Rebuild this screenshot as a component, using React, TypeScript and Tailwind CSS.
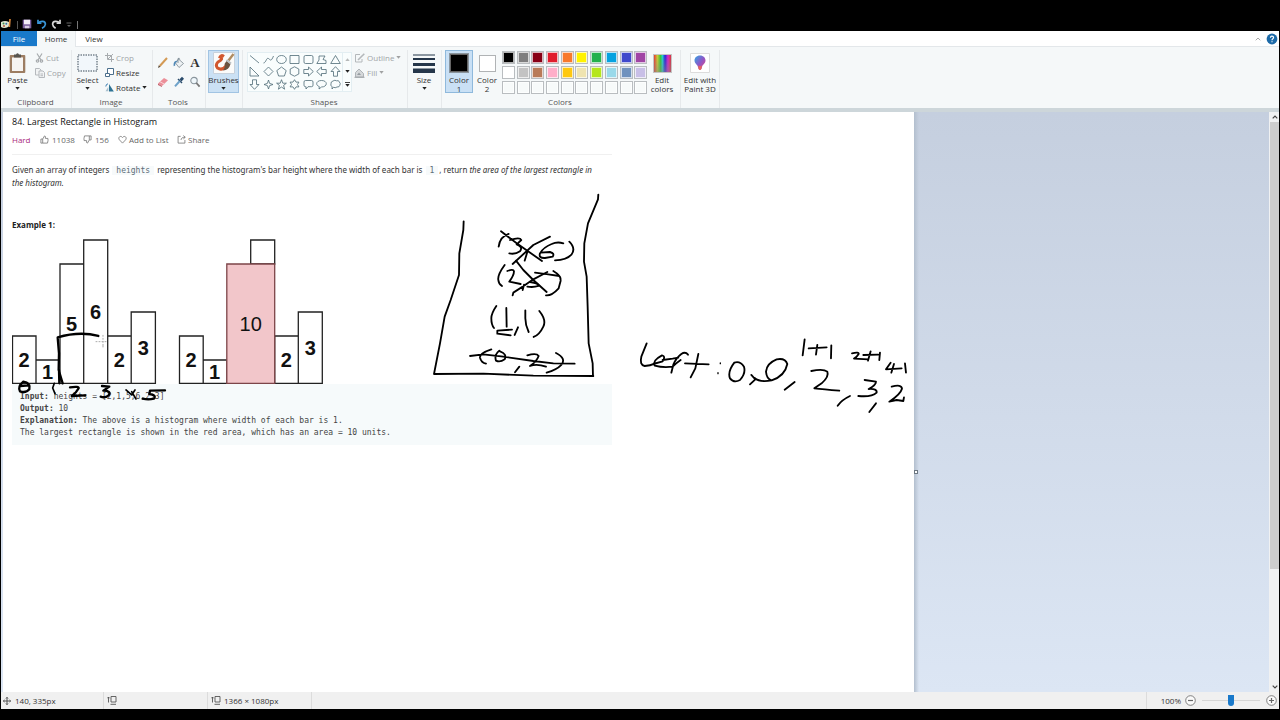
import type { ReactNode } from "react";

const label = "text-[8px] leading-[9px]";

function Arrow() {
  return (
    <svg width="5" height="3" viewBox="0 0 5 3" aria-hidden="true">
      <path d="M0.3 0h4.4L2.5 2.8z" fill="#222" />
    </svg>
  );
}

function Group({ name, className, children }: { name?: string; className: string; children: ReactNode }) {
  return (
    <section className={`flex shrink-0 flex-col border-r border-[#e6e9eb] ${className}`}>
      <div className="flex flex-1 items-start">{children}</div>
      <h2 className="h-3 pr-[2px] text-center text-[8px] leading-[11px] text-[#555]">{name}</h2>
    </section>
  );
}

function BigButton({ icon, text, arrow, className = "" }: { icon: ReactNode; text: ReactNode; arrow?: boolean; className?: string }) {
  return (
    <button className={`flex flex-col items-center justify-start ${className}`}>
      <span className="flex h-[22px] shrink-0 items-center justify-center">{icon}</span>
      <span className={`${label} pt-px text-center text-[#333]`}>{text}</span>
      {arrow && (
        <span className="pt-[3px]">
          <Arrow />
        </span>
      )}
    </button>
  );
}

function SmallButton({ icon, text, muted, arrow }: { icon: ReactNode; text: string; muted?: boolean; arrow?: boolean }) {
  return (
    <button className={`flex h-[15px] items-center gap-[2px] ${label} ${muted ? "text-[#a0a4a7]" : "text-[#333]"}`}>
      {icon}
      <span>{text}</span>
      {arrow && (
        <span className={muted ? "opacity-40" : ""}>
          <Arrow />
        </span>
      )}
    </button>
  );
}

const shapePaths = [
  "M1 1.5L10 9",
  "M0.5 9C3 9 3.5 3 5.5 4.5S8 8 10.5 2",
  "M5.5 1.5C8.3 1.5 10.3 3.2 10.3 5.5S8.3 9.5 5.5 9.5S0.7 7.8 0.7 5.5S2.7 1.5 5.5 1.5z",
  "M1 1.5h9v8h-9z",
  "M2.5 1.5h6q1.5 0 1.5 1.5v5q0 1.5-1.5 1.5h-6q-1.5 0-1.5-1.5v-5q0-1.5 1.5-1.5z",
  "M3 2h6L7 5.5l3 1V9.5H0.8L3 6z",
  "M5.5 1.5L10.3 9.5H0.7z",
  "M1 1L10 10H1z",
  "M5.5 1L10 5.5L5.5 10L1 5.5z",
  "M5.5 1L10.2 4.6L8.4 10H2.6L0.8 4.6z",
  "M5.5 0.8L9.8 3V8L5.5 10.2L1.2 8V3z",
  "M0.8 3.5H5.5V1L10.3 5.5L5.5 10V7.5H0.8z",
  "M10.2 3.5H5.5V1L0.7 5.5L5.5 10V7.5H10.2z",
  "M3.5 10.2V5.5H1L5.5 0.7L10 5.5H7.5V10.2z",
  "M3.5 0.8V5.5H1L5.5 10.3L10 5.5H7.5V0.8z",
  "M5.5 1L6.6 4.4L10 5.5L6.6 6.6L5.5 10L4.4 6.6L1 5.5L4.4 4.4z",
  "M5.5 0.7L6.8 4.2H10.4L7.6 6.4L8.6 10.2L5.5 8L2.4 10.2L3.4 6.4L0.6 4.2H4.2z",
  "M5.5 0.7L7 3.1H9.9L8.5 5.5L9.9 7.9H7L5.5 10.3L4 7.9H1.1L2.5 5.5L1.1 3.1H4z",
  "M2.5 1.5h6q1.5 0 1.5 1.5v3.2q0 1.5-1.5 1.5H5L3 10V7.7h-.5Q1 7.7 1 6.2V3q0-1.5 1.5-1.5z",
  "M5.5 1.5C8.3 1.5 10.3 2.8 10.3 4.7S8.3 8 5.5 8L3 10L3.3 7.6C1.7 7 0.7 6 0.7 4.7C0.7 2.8 2.7 1.5 5.5 1.5z",
  "M3 2Q5 0.6 6.5 1.8Q9 1 9.3 3Q11 4.5 9.8 6.3Q9.5 8.3 7 8Q5 9.4 3.6 8.2L2 10L2.2 7.6Q0 6.8 1 4.8Q0.6 2.6 3 2z",
];

const palette = [
  "bg-black", "bg-[#7f7f7f]", "bg-[#880015]", "bg-[#e01c2c]", "bg-[#f8792c]",
  "bg-[#fff200]", "bg-[#24b14d]", "bg-[#05a2e0]", "bg-[#3f48cc]", "bg-[#a044a4]",
  "bg-white", "bg-[#c3c3c3]", "bg-[#b97a57]", "bg-[#ffaec9]", "bg-[#fec810]",
  "bg-[#efe4b0]", "bg-[#b5e61d]", "bg-[#99d9ea]", "bg-[#7092be]", "bg-[#c8bfe7]",
  "bg-[#f7fafa]", "bg-[#f7fafa]", "bg-[#f7fafa]", "bg-[#f7fafa]", "bg-[#f7fafa]",
  "bg-[#f7fafa]", "bg-[#f7fafa]", "bg-[#f7fafa]", "bg-[#f7fafa]", "bg-[#f7fafa]",
];

function TitleBar() {
  return (
    <header className="flex h-[31px] shrink-0 items-end gap-[5px] bg-black pb-[2px] text-[#444]">
      <svg width="11" height="11" viewBox="0 0 11 11" aria-hidden="true">
        <path d="M0 4Q4 2 8 4Q10 7 7 9Q3 11 0 9z" fill="#dfe6cf" />
        <circle cx="2.5" cy="5.5" r="1" fill="#3d8b50" />
        <circle cx="5.3" cy="5.8" r="1" fill="#356fa8" />
        <circle cx="3" cy="8" r="0.9" fill="#b84a35" />
        <path d="M9 1L8.4 9" stroke="#d9863a" strokeWidth="1.6" />
      </svg>
      <span className="h-2 w-px bg-[#555]" />
      <button aria-label="Save" className="ml-[-1px]">
        <svg width="10" height="10" viewBox="0 0 10 10" className="block">
          <path d="M0.7 0.7h8.6v8.6H0.7z" fill="#7a5f9d" />
          <path d="M2 0.7h6v4.6H2z" fill="#f3eef8" />
          <path d="M2.8 6.8h4.6v2.5H2.8z" fill="#d7cbe3" />
        </svg>
      </button>
      <button aria-label="Undo">
        <svg width="10" height="10" viewBox="0 0 10 10" className="block" fill="none" stroke="#3995d6" strokeWidth="1.7">
          <path d="M1 0.8V4.2H4.4" />
          <path d="M1.2 4C3.5 1.6 8.4 1.6 8.4 5.2Q8.2 7.6 5 9.3" />
        </svg>
      </button>
      <button aria-label="Redo" className="ml-[-1px]">
        <svg width="10" height="10" viewBox="0 0 10 10" className="block" fill="none" stroke="#d8d8d8" strokeWidth="1.7">
          <path d="M9 0.8V4.2H5.6" />
          <path d="M8.8 4C6.5 1.6 1.6 1.6 1.6 5.2Q1.8 7.6 4.6 9.3" />
        </svg>
      </button>
      <button aria-label="Customize Quick Access Toolbar">
        <svg width="6" height="8" viewBox="0 0 6 8" className="block">
          <path d="M0.5 2h5" stroke="#666" />
          <path d="M1 4h4L3 6z" fill="#666" />
        </svg>
      </button>
      <span className="h-2 w-px bg-[#777]" />
    </header>
  );
}

function Tabs() {
  return (
    <nav className="flex h-4 shrink-0 items-stretch border-b border-[#e3e7ea] bg-white pr-px text-[8px] text-[#333]">
      <button className="w-[36px] bg-[#1979ca] text-white">File</button>
      <button className="-mb-px w-[39px] border-r border-[#e3e7ea] bg-[#f5f8f9]">Home</button>
      <button className="w-[36px]">View</button>
      <span className="flex-1" />
      <button aria-label="Collapse the Ribbon" className="px-[3px]">
        <svg width="6" height="4" viewBox="0 0 6 4" fill="none" stroke="#aaa">
          <path d="M0.7 3.3L3 1L5.3 3.3" />
        </svg>
      </button>
      <button aria-label="Help" className="pl-[2px]">
        <svg width="12" height="12" viewBox="0 0 12 12">
          <circle cx="6" cy="6" r="5.4" fill="#1c6aa8" />
          <path d="M4.4 4.7Q4.5 3.2 6 3.2T7.6 4.6Q7.6 5.4 6.6 6Q6 6.4 6 7.2M6 8.2V9.3" fill="none" stroke="#fff" strokeWidth="1.2" />
        </svg>
      </button>
    </nav>
  );
}

function Ribbon() {
  return (
    <div className="flex h-[61px] shrink-0 bg-[#f5f8f9] pt-[3px] pl-px">
      <Group name="Clipboard" className="w-[70px]">
        <BigButton
          className="w-[31px] pt-[2px]"
          text="Paste"
          arrow
          icon={
            <svg width="17" height="21" viewBox="0 0 17 21">
              <rect x="0.7" y="2" width="15.6" height="18" rx="1" fill="#9c7d62" />
              <rect x="3" y="4.4" width="11" height="13.6" fill="#f6f4f2" />
              <path d="M5 1.4h2Q8.5-0.8 10 1.4h2v3H5z" fill="#57544f" />
            </svg>
          }
        />
        <div className="flex flex-col pl-[2px]">
          <SmallButton
            muted
            text="Cut"
            icon={
              <svg width="9" height="10" viewBox="0 0 8 10" fill="none" stroke="#a7abae" strokeWidth="1.2">
                <path d="M1.5 0.5L5.5 7M6.5 0.5L2.5 7" />
                <circle cx="2" cy="8" r="1.2" />
                <circle cx="6" cy="8" r="1.2" />
              </svg>
            }
          />
          <SmallButton
            muted
            text="Copy"
            icon={
              <svg width="10" height="10" viewBox="0 0 10 10" fill="#f1f3f4" stroke="#b5b9bd">
                <path d="M0.5 0.5h4l1.5 1.5v5h-5.5z" />
                <path d="M4 3h4l1.5 1.5v5H4z" />
                <path d="M5.5 6h2.5M5.5 7.7h2.5" />
              </svg>
            }
          />
        </div>
      </Group>

      <Group name="Image" className="w-[81px]">
        <BigButton
          className="w-[31px] pt-[2px]"
          text="Select"
          arrow
          icon={
            <svg width="21" height="18" viewBox="0 0 21 18">
              <rect x="1" y="1" width="19" height="16" fill="#f2f7fb" stroke="#3b4a58" strokeDasharray="1.5 1" />
            </svg>
          }
        />
        <div className="flex flex-col pl-[2px]">
          <SmallButton
            muted
            text="Crop"
            icon={
              <svg width="9" height="9" viewBox="0 0 9 9" fill="none" stroke="#a7abae">
                <path d="M2.5 0v6.5H9M0 2.5h6.5V9M3 6L8 1" />
              </svg>
            }
          />
          <SmallButton
            text="Resize"
            icon={
              <svg width="9" height="9" viewBox="0 0 9 9" fill="#fff" stroke="#4b6f8c">
                <path d="M2.5 0.5h6v6h-6z" />
                <path d="M0.5 5.5h4v3h-4z" />
              </svg>
            }
          />
          <SmallButton
            text="Rotate"
            arrow
            icon={
              <svg width="9" height="9" viewBox="0 0 9 9">
                <path d="M4 8.5V1L8.8 8.5z" fill="#2d7394" />
                <path d="M0.5 8.3h2.8V4z" fill="#a7bfce" />
                <path d="M0.8 3.5Q1 1 3 0.8" fill="none" stroke="#3d7fb1" />
              </svg>
            }
          />
        </div>
      </Group>

      <Group name="Tools" className="w-[53px]">
        <div className="grid w-full grid-cols-3 place-items-center gap-y-[7px] px-[2px] pt-[7px]">
          <button aria-label="Pencil">
            <svg width="12" height="12" viewBox="0 0 12 12" className="block">
              <path d="M10 1L2.8 9" stroke="#d39a55" strokeWidth="2" />
              <path d="M1 11L1.8 8.3L3.5 9.8z" fill="#554433" />
            </svg>
          </button>
          <button aria-label="Fill with color">
            <svg width="12" height="12" viewBox="0 0 12 12" className="block">
              <path d="M5.5 2L10.5 6.5L6 10.5L2.5 6z" fill="#eef2f4" stroke="#7b8891" strokeWidth="0.8" />
              <path d="M5 6V1.5Q6.5 0.5 6.8 2.5" fill="none" stroke="#70808a" strokeWidth="0.8" />
              <path d="M0.7 9.3Q-0.2 3 5 3.8Q1.8 5.5 2.2 8.5z" fill="#5089b7" />
            </svg>
          </button>
          <button aria-label="Text" className="font-['Liberation_Serif',serif] text-[13px] leading-3 font-bold text-[#333]">A</button>
          <button aria-label="Eraser">
            <svg width="12" height="12" viewBox="0 0 12 12" className="block">
              <path d="M1 7.5L7 2L11 4.3L5 10z" fill="#eb8f99" />
              <path d="M1 7.5L5 10V11L1 9z" fill="#c2626d" />
              <path d="M3 5.8L7.2 8" stroke="#f9d4d7" />
            </svg>
          </button>
          <button aria-label="Color picker">
            <svg width="12" height="12" viewBox="0 0 12 12" className="block">
              <path d="M6.5 3.2L9 0.8L11 2.8L8.5 5.5z" fill="#2a4b6b" />
              <path d="M5 3L9 7" stroke="#2a4b6b" strokeWidth="1.5" />
              <path d="M6.8 5L2 10.3" stroke="#6ea2c9" strokeWidth="2" />
            </svg>
          </button>
          <button aria-label="Magnifier">
            <svg width="12" height="12" viewBox="0 0 12 12" className="block">
              <circle cx="5" cy="4.6" r="3.2" fill="#eff7fb" stroke="#8a959c" strokeWidth="1.1" />
              <path d="M7.4 7L10.6 10.6" stroke="#777" strokeWidth="1.8" />
            </svg>
          </button>
        </div>
      </Group>

      <Group className="w-[37px]">
        <BigButton
          className="ml-[2px] h-[43px] w-[31px] border border-[#a1c4e3] bg-[#cbe1f4] pt-px"
          text="Brushes"
          arrow
          icon={
            <svg width="22" height="22" viewBox="0 0 22 22">
              <path d="M0.5 0.5h21v21h-21z" fill="#fbfbfa" stroke="#c8d2dc" />
              <path d="M11 4.5Q8 2.5 7 5Q11 7 5 10Q2 13 4.500 16Q9 19 13 14" fill="none" stroke="#d1572e" strokeWidth="3" />
              <path d="M20.5 2L15.5 8.5" stroke="#b08c62" strokeWidth="2.4" />
              <path d="M13.5 9L17.5 12Q16 18 10 18.5Q12.500 15 11.500 12z" fill="#6b5340" />
              <path d="M13.5 8L18 11.5" stroke="#b9bfc3" strokeWidth="2" />
            </svg>
          }
        />
      </Group>

      <Group name="Shapes" className="w-[165px]">
        <div className="mt-[2px] ml-[4px] flex h-[40px] border border-[#e3eef2] bg-[#f9fdfd]">
          <div className="grid w-[94px] grid-cols-7 grid-rows-3 place-items-center">
            {shapePaths.map((d, i) => (
              <button key={i} aria-label={`Shape ${i + 1}`}>
                <svg width="11" height="11" viewBox="0 0 11 11" className="block" fill="none" stroke="#4e6b76" strokeWidth="0.8">
                  <path d={d} />
                </svg>
              </button>
            ))}
          </div>
          <div className="flex w-[9px] flex-col items-center justify-around border-l border-[#e3eef2]">
            <button aria-label="Previous shapes" className="flex rotate-180 opacity-30"><Arrow /></button>
            <button aria-label="Next shapes" className="flex"><Arrow /></button>
            <button aria-label="More shapes" className="flex border-t border-[#444] pt-px"><Arrow /></button>
          </div>
        </div>
        <div className="flex flex-col pl-[2px]">
          <SmallButton
            muted
            arrow
            text="Outline"
            icon={
              <svg width="11" height="10" viewBox="0 0 11 10" fill="none" stroke="#b4b8bb">
                <path d="M6 1.5H1.5V9H8V6" />
                <path d="M10.3 0.7L4 7" strokeWidth="1.6" />
              </svg>
            }
          />
          <SmallButton
            muted
            arrow
            text="Fill"
            icon={
              <svg width="11" height="10" viewBox="0 0 11 10">
                <path d="M1.5 4.5L5 1L9.5 5.5V9H1.5z" fill="#d5d8da" stroke="#aeb3b7" />
                <path d="M0.5 9.3h10" stroke="#9fa4a8" />
                <path d="M3 7L5 4.6L7 7z" fill="#969ca1" />
              </svg>
            }
          />
        </div>
      </Group>

      <Group className="w-[34px]">
        <BigButton
          className="w-[32px] pt-[2px]"
          text="Size"
          arrow
          icon={
            <svg width="22" height="19" viewBox="0 0 22 19" fill="#25364a">
              <path d="M0 0.5h22v1H0zM0 4h22v2H0zM0 9h22v3H0zM0 14.5h22v4.5H0z" />
            </svg>
          }
        />
      </Group>

      <Group name="Colors" className="w-[239px]">
        <BigButton
          className="ml-[3px] h-[43px] w-[28px] border border-[#8fb9dc] bg-[#c9e0f5] pt-px"
          text={<>Color<br />1</>}
          icon={<span className="block size-5 border border-[#8a959e] bg-black ring-1 ring-white/40 ring-inset" />}
        />
        <BigButton
          className="w-[28px] pt-[2px]"
          text={<>Color<br />2</>}
          icon={<span className="block size-[17px] border border-[#b0b3b5] bg-white" />}
        />
        <div className="mt-[1px] ml-[1px] grid w-[147px] grid-cols-10 gap-y-[2px]">
          {palette.map((c, i) => (
            <button key={i} aria-label={`Color ${i + 1}`} className={`size-[13px] border border-[#b9bdc0] ring-1 ring-white/70 ring-inset ${c}`} />
          ))}
        </div>
        <BigButton
          className="w-[26px] pt-[2px]"
          text={<>Edit<br />colors</>}
          icon={<span className="block size-[19px] border border-[#c4c4c4] bg-[linear-gradient(to_bottom,transparent,#8888),linear-gradient(to_right,#e33,#cc3_20%,#3c3_38%,#2cc_50%,#22d_65%,#d2c_82%,#d33)]" />}
        />
      </Group>

      <Group className="w-[39px]">
        <BigButton
          className="w-full pt-[2px]"
          text={<span className="whitespace-nowrap">Edit with<br />Paint 3D</span>}
          icon={
            <svg width="20" height="20" viewBox="0 0 20 20">
              <defs>
                <linearGradient id="drop" x1="0" y1="0" x2="1" y2="1">
                  <stop offset="0" stopColor="#32a8e5" />
                  <stop offset="0.5" stopColor="#8c58c8" />
                  <stop offset="1" stopColor="#e8417f" />
                </linearGradient>
              </defs>
              <path d="M0.5 0.5h19v19h-19z" fill="#fff" stroke="#dcdcdc" />
              <path d="M10 2.5C13.5 2.5 15.5 5 15.5 7.5C15.5 10.5 12.5 11.5 12 14Q11.7 17 10 17T8 14C7.5 11.5 4.5 10.5 4.5 7.5C4.5 5 6.5 2.5 10 2.5z" fill="url(#drop)" />
              <path d="M8.3 12.5Q10 14 11.8 12.5L11.3 16Q10 18 8.6 16z" fill="#e9635a" />
            </svg>
          }
        />
      </Group>
    </div>
  );
}

function Histogram() {
  return (
    <svg width="312" height="145" viewBox="12 239 312 145" className="mt-2 block" fontFamily="'Liberation Sans', Arial, sans-serif" fontSize="20" fontWeight="700" textAnchor="middle">
      <g fill="#fff" stroke="#222" strokeWidth="1.3">
        <path d="M12.5 336h23.5v47.5H12.5zM36 360h24v23.5H36zM60 264h23.7v119.5H60zM83.7 240h24v143.5h-24zM107.7 336h23.5v47.5h-23.5zM131.2 312h24.2v71.5h-24.2z" />
        <path d="M179.5 336h23.7v47.5h-23.7zM203.2 360h23.8v23.5h-23.8zM250.7 240h24v24h-24zM274.7 336h23.6v47.5h-23.6zM298.3 312h24v71.5h-24z" />
        <path d="M226.8 264h47.9v119.5h-47.9z" fill="#f2c6ca" stroke="#7c4448" />
      </g>
      <g fill="#111">
        <text x="24" y="367">2</text>
        <text x="47.5" y="379">1</text>
        <text x="71.5" y="331">5</text>
        <text x="95.5" y="319">6</text>
        <text x="119.3" y="367">2</text>
        <text x="143.2" y="355">3</text>
        <text x="191" y="367">2</text>
        <text x="214.5" y="379">1</text>
        <text x="286.3" y="367">2</text>
        <text x="310.2" y="355">3</text>
        <text x="250.7" y="331" fontWeight="400">10</text>
      </g>
    </svg>
  );
}

function Ink() {
  return (
    <svg className="pointer-events-none absolute inset-0 size-full" viewBox="3 112 911 580" fill="none" stroke="#000" strokeWidth="5.5" strokeLinecap="round" strokeLinejoin="round" aria-hidden="true">
      <g transform="translate(420 190) scale(0.3333)">
        <path d="M131 94L130 120L118 190L117 255L92 330L74 380L60 460L42 552L190 551L340 557L520 558" />
        <path d="M535 14L534 28L504 100L493 160L492 215L500 260L503 350L506 460L518 520L519 558" />
        <path d="M266 132Q240 140 236 170M243 124L290 160L366 213M270 150Q300 140 304 150L290 163Q310 170 300 184Q285 194 268 190M322 186L314 212M390 140L340 165L278 222" />
        <path d="M430 160Q412 154 395 162Q370 172 360 190Q355 205 375 204L398 200Q405 190 390 186L362 188M448 155Q468 175 455 193Q440 210 405 211" />
        <path d="M254 225Q232 255 235 270Q236 282 246 288M262 243Q280 236 282 244Q282 256 268 275L302 282M312 284L308 300M288 212L310 240L340 270L380 306M382 246L340 268Q310 290 280 308L278 316" />
        <path d="M345 248L385 253L418 258M330 276Q358 280 356 288Q340 293 322 290M400 243Q425 258 422 272L416 295Q395 318 378 316" />
        <path d="M229 348Q214 370 214 385Q214 405 222 414M259 354L260 410M276 419L232 422L232 431L272 436M294 412L284 435M316 361L316 385Q316 405 326 426M358 363Q380 390 370 410Q358 435 341 441" />
        <path d="M150 498L190 493L250 500L340 513L400 520L464 521M214 478Q178 490 180 503Q184 518 198 521M238 482Q222 495 228 512Q240 518 254 508Q262 492 240 484M298 530L285 547M322 496Q350 488 356 498Q350 515 330 528Q350 520 378 530M408 489Q440 505 424 525Q410 540 380 548" />
      </g>
      <g transform="translate(630 320) scale(0.3333)">
        <path d="M50 70L34 110Q28 135 44 138Q60 137 76 130L98 124Q108 108 96 106Q66 122 74 137Q100 144 128 140M70 132L98 124M98 120L128 116L145 113M174 104Q166 94 154 102Q138 114 130 134L124 158M128 140Q140 128 152 120M205 102L196 145L182 172M165 130L236 133" />
        <path d="M264 158v3M271 129v2" strokeWidth="4" />
        <path d="M313 128Q292 155 300 175Q312 190 330 180Q348 160 342 140Q330 122 313 128M364 165L376 178L360 193M374 174Q390 188 425 181M440 118Q410 130 408 155Q410 178 425 181Q465 168 472 132Q466 113 440 118" />
        <path d="M494 186L464 209M544 153Q580 145 592 155Q598 170 575 190L553 205Q580 208 628 212M660 228Q635 240 623 257M704 180L738 185Q738 195 716 207Q742 205 740 218Q725 232 685 228M738 250L718 276M785 200Q815 192 816 206Q812 222 778 245L800 240L820 243L822 232" />
        <path d="M524 58L518 106M536 85L590 82M562 75L558 104M604 76L603 115M666 100Q688 95 686 102Q680 112 672 116L715 118M700 105L745 104M722 94L714 122M750 98L748 120M782 128L768 148L815 145M792 132L784 158M825 130L828 158" />
      </g>
      <g transform="translate(0 230) scale(0.3333)" strokeWidth="7">
        <path d="M70 455Q52 470 60 484Q78 490 88 478Q92 458 70 455M60 468L88 466M295 318Q240 303 173 322L177 370L176 420L188 460M177 420L178 460" />
        <path d="M210 472Q238 468 236 475Q228 490 215 498L256 496M306 468L328 470L310 482Q335 482 326 496Q315 505 302 500M495 481L450 482L448 492Q470 495 462 506Q445 510 428 506" />
        <path d="M163 460L158 474L165 491M378 480L395 495L405 480M395 485L408 507" strokeWidth="5" />
        <path d="M309 316v30M288 335h30M309 348v8" stroke="#aaa" strokeWidth="3" strokeDasharray="3 6" />
      </g>
    </svg>
  );
}

const metaIcon = { width: 9, height: 9, viewBox: "0 0 10 10", fill: "none", stroke: "#777", strokeWidth: 0.9 };
const thumb = "M1 4.5H3L5 1Q6.5 0.8 6 3.8H8.8Q9.3 6 8.3 9H3V4.5M1 4.5V9H3";
const inlineCode = "mx-px bg-[#f7fafb] px-[4px] font-['DejaVu_Sans_Mono',monospace] text-[8px] leading-none text-[#5d6d77]";

function Problem() {
  return (
    <article className="w-[609px] px-[9px] pt-1 text-[8px] text-[#3c4043]">
      <h1 className="text-[9px] leading-3 font-medium text-[#111]">84. Largest Rectangle in Histogram</h1>
      <div className="mt-[5px] flex h-[13px] items-center text-[#666]">
        <span className="w-[28px] text-[#a8287b]">Hard</span>
        <button className="flex w-[43px] items-center gap-[3px]">
          <svg {...metaIcon}><path d={thumb} /></svg>11038
        </button>
        <button className="flex w-[35px] items-center gap-[3px]">
          <svg {...metaIcon} className="rotate-180"><path d={thumb} /></svg>156
        </button>
        <button className="flex w-[59px] items-center gap-[2px] whitespace-nowrap">
          <svg {...metaIcon}><path d="M5 9L1.5 5.3C-0.5 2.5 3 0 5 2.8C7 0 10.5 2.5 8.5 5.3z" /></svg>Add to List
        </button>
        <button className="flex items-center gap-[2px]">
          <svg {...metaIcon}><path d="M4 1.5H1.2V9H8.8V5.5M4.5 5.5Q4.5 2.5 9 2.5M7 0.6L9.2 2.5L7 4.4" /></svg>Share
        </button>
      </div>
      <hr className="mt-[8px] -mr-[9px] border-[#f0f0f0]" />
      <p className="mt-[8px] font-['Noto_Sans',sans-serif] leading-[13px] text-[#333]">
        Given an array of integers{" "}
        <code className={inlineCode}>heights</code>{" "}
        representing the histogram's bar height where the width of each bar is{" "}
        <code className={inlineCode}>1</code>, return{" "}
        <em>the area of the largest rectangle in</em>
        <br />
        <em>the histogram.</em>
      </p>
      <h2 className="mt-[30px] leading-3 font-bold text-[#222]">Example 1:</h2>
      <Histogram />
      <pre className="-mr-[9px] bg-[#f6fafb] px-2 pt-[7px] pb-[6px] font-['DejaVu_Sans_Mono',monospace] text-[8px] leading-3 text-[#444]">
        <span className="block"><b>Input:</b> heights = [2,1,5,6,2,3]</span>
        <span className="block"><b>Output:</b> 10</span>
        <span className="block"><b>Explanation:</b> The above is a histogram where width of each bar is 1.</span>
        <span className="block">The largest rectangle is shown in the red area, which has an area = 10 units.</span>
      </pre>
    </article>
  );
}

function ScrollChevron({ down }: { down?: boolean }) {
  return (
    <button aria-label={down ? "Scroll down" : "Scroll up"} className="flex h-[10px] items-center justify-center">
      <svg width="6" height="4" viewBox="0 0 6 4" fill="none" stroke="#444" strokeWidth="1.2">
        <path d={down ? "M0.7 0.7L3 3L5.3 0.7" : "M0.7 3.3L3 1L5.3 3.3"} />
      </svg>
    </button>
  );
}

function Workspace() {
  return (
    <main className="flex min-h-0 flex-1 border-t-4 border-[#cdd6da] bg-linear-to-b from-[#c5cfdf] to-[#dce6f4]">
      <div className="flex min-w-0 flex-1 overflow-hidden pl-[2px]">
        <div className="relative w-[911px] shrink-0 bg-white">
          <Problem />
          <Ink />
        </div>
        <div className="flex w-[5px] items-center bg-linear-to-r from-[#b3bfce] to-transparent">
          <span className="mt-[140px] size-[4px] border border-[#6d7883] bg-white" />
        </div>
      </div>
      <div className="flex w-[10px] flex-col bg-[#f0f1f2] pl-px">
        <ScrollChevron />
        <div className="h-[447px] shrink bg-[#cdcdcd]" />
        <span className="flex-1" />
        <ScrollChevron down />
      </div>
    </main>
  );
}

function SizeIcon() {
  return (
    <svg width="10" height="9" viewBox="0 0 10 9" fill="none" stroke="#555">
      <path d="M1.5 1V6.5M0.3 2.3L1.5 1L2.7 2.3M4 0.5H9V6H4zM3.5 8.3H9" strokeWidth="0.9" />
    </svg>
  );
}

function StatusBar() {
  return (
    <footer className="flex h-[17px] shrink-0 items-center bg-[#f0f0f0] pr-[2px] text-[8px] text-[#333]">
      <div className="flex h-full w-[103px] items-center gap-[4px] border-r border-[#dcdcdc] pl-[2px]">
        <svg width="8" height="8" viewBox="0 0 8 8" fill="none" stroke="#444" strokeWidth="0.9">
          <path d="M4 0.3V7.7M0.3 4H7.7M3 1.5L4 0.4L5 1.5M3 6.5L4 7.6L5 6.5M1.5 3L0.4 4L1.5 5M6.5 3L7.6 4L6.5 5" />
        </svg>
        140, 335px
      </div>
      <div className="flex h-full w-[104px] items-center border-r border-[#dcdcdc] pl-[3px]"><SizeIcon /></div>
      <div className="flex h-full w-[104px] items-center gap-[3px] border-r border-[#dcdcdc] pl-[3px]"><SizeIcon />1366 × 1080px</div>
      <span className="flex-1" />
      <div className="flex h-full items-center border-l border-[#dcdcdc] pl-[14px]">
        <label htmlFor="zoom" className="pr-[4px]">100%</label>
        <button aria-label="Zoom out">
          <svg width="11" height="11" viewBox="0 0 11 11" className="block" fill="#fafafa" stroke="#666" strokeWidth="0.8">
            <circle cx="5.5" cy="5.5" r="4.8" /><path d="M3 5.5h5" strokeWidth="1.2" />
          </svg>
        </button>
        <input
          id="zoom"
          type="range"
          defaultValue={50}
          className="mx-[6px] h-3 w-[58px] appearance-none bg-transparent [&::-webkit-slider-runnable-track]:h-px [&::-webkit-slider-runnable-track]:bg-[#d5d5d5] [&::-webkit-slider-thumb]:-mt-[5px] [&::-webkit-slider-thumb]:h-[11px] [&::-webkit-slider-thumb]:w-[6px] [&::-webkit-slider-thumb]:appearance-none [&::-webkit-slider-thumb]:rounded-b-sm [&::-webkit-slider-thumb]:bg-[#1979ca]"
        />
        <button aria-label="Zoom in">
          <svg width="11" height="11" viewBox="0 0 11 11" className="block" fill="#fafafa" stroke="#666" strokeWidth="0.8">
            <circle cx="5.5" cy="5.5" r="4.8" /><path d="M3 5.5h5M5.5 3v5" strokeWidth="1.2" />
          </svg>
        </button>
      </div>
    </footer>
  );
}

export default function App() {
  return (
    <div className="flex h-screen flex-col overflow-hidden bg-black pr-px pb-[11px] pl-px font-['Open_Sans','Noto_Sans',sans-serif]">
      <TitleBar />
      <Tabs />
      <Ribbon />
      <Workspace />
      <StatusBar />
    </div>
  );
}
